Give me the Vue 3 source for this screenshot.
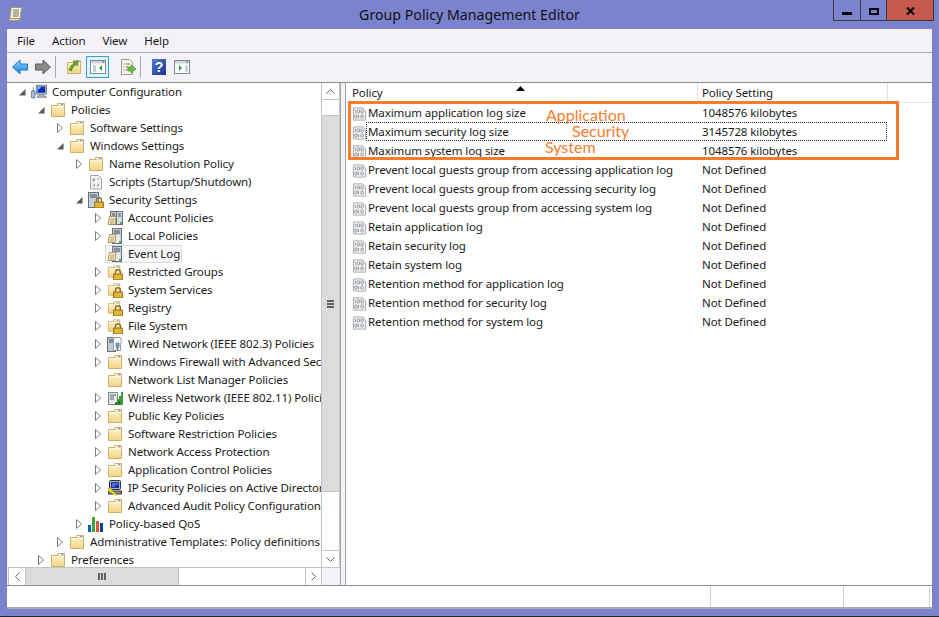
<template>
    <div class="window">
        <svg class="icon-defs" aria-hidden="true">
            <defs>
                <linearGradient id="folderFill" x1="0" y1="0" x2="0" y2="1">
                    <stop offset="0" stop-color="#fdf1c4" />
                    <stop offset="1" stop-color="#f3d483" />
                </linearGradient>
                <linearGradient id="blueArrow" x1="0" y1="0" x2="0" y2="1">
                    <stop offset="0" stop-color="#8fd4f8" />
                    <stop offset="1" stop-color="#1482d8" />
                </linearGradient>
                <linearGradient id="helpFill" x1="0" y1="0" x2="1" y2="1">
                    <stop offset="0" stop-color="#4f7fd8" />
                    <stop offset="1" stop-color="#1c3285" />
                </linearGradient>
                <symbol id="folder" viewBox="0 0 16 16">
                    <path d="M1.5 3.5h13v11h-13z" fill="url(#folderFill)" stroke="#cdb06c" />
                    <path d="M7.5 1.5h7v2.5h-7z" fill="#fff" stroke="#cdb06c" />
                    <path d="M11 2.5h2.5" stroke="#6ba6e0" />
                    <path d="M2 4.5h12" stroke="#fff8dc" />
                </symbol>
                <symbol id="lock" viewBox="0 0 16 16">
                    <path d="M8.5 10V8.3a2.5 2.5 0 0 1 5 0V10" fill="none" stroke="#8a7440" stroke-width="1.4" />
                    <rect x="6.5" y="10" width="9" height="6" fill="#d8a41e" stroke="#8d6a12" stroke-width=".8" />
                    <path d="M7.5 12h7M7.5 14h7" stroke="#f3d26a" stroke-width=".8" />
                </symbol>
                <symbol id="folder-lock" viewBox="0 0 16 16">
                    <use href="#folder" width="14" height="15" />
                    <use href="#lock" width="16" height="16" />
                </symbol>
                <symbol id="script" viewBox="0 0 16 16">
                    <path d="M2.5 1.5h8l3 3v10.5h-11z" fill="#f4f4f4" stroke="#a4a4a4" />
                    <path d="M5 5h2l-1 2h-1zM9 5h2.5M5 9.5l2 1.5-2 1.5M9 9.5l2 1.5-2 1.5" fill="none" stroke="#8c8c8c" stroke-width=".9" />
                </symbol>
                <symbol id="server" viewBox="0 0 16 16">
                    <rect x="5.5" y=".5" width="9" height="15" fill="#c2cbd3" stroke="#66727c" />
                    <path d="M7 3h6M7 5h6" stroke="#42505c" />
                    <rect x="6.5" y="7" width="7" height="8" fill="#e7ebee" />
                    <rect x="12" y="13" width="2" height="2" fill="#3dbb3d" />
                </symbol>
                <symbol id="paper" viewBox="0 0 16 16">
                    <path d="M2.5 6.5h6.5l-1 8h-7z" fill="#fbeebf" stroke="#a89868" />
                    <path d="M3.5 9h4M3 11h4M3 13h3.5" stroke="#8e8560" stroke-width=".8" />
                </symbol>
                <symbol id="server-lock" viewBox="0 0 16 16">
                    <rect x=".5" y=".5" width="10" height="15" fill="#c7d0d8" stroke="#60707c" />
                    <path d="M2 3h7M2 5h7" stroke="#3d4a56" />
                    <use href="#lock" width="16" height="16" />
                </symbol>
                <symbol id="server-doc" viewBox="0 0 16 16">
                    <use href="#server" width="16" height="16" />
                    <use href="#paper" width="16" height="16" />
                </symbol>
                <symbol id="servers" viewBox="0 0 16 16">
                    <rect x="3.5" y="1.5" width="6" height="13" fill="#c2cbd3" stroke="#66727c" />
                    <path d="M5 4h3M5 6h3" stroke="#42505c" />
                    <rect x="9.5" y="1.5" width="6" height="13" fill="#d5dce2" stroke="#66727c" />
                    <path d="M11 4h3M11 6h3" stroke="#42505c" />
                    <rect x="13" y="12" width="2" height="2" fill="#3dbb3d" />
                    <use href="#paper" width="16" height="16" />
                </symbol>
                <symbol id="computer" viewBox="0 0 20 18">
                    <rect x="6.5" y=".5" width="13" height="11" fill="#dfe3e8" stroke="#5d6670" />
                    <rect x="8" y="2" width="10" height="8" fill="#0c2cb8" />
                    <path d="M8 2h5l-3 4H8z" fill="#6fb4f0" />
                    <path d="M10 12h6v2h3v2H8v-2h2z" fill="#aab3bc" stroke="#5d6670" stroke-width=".6" />
                    <rect x=".5" y="7.5" width="4.5" height="9" rx="1" fill="#a8c0d8" stroke="#4d6a86" />
                    <path d="M2.7 3v6" stroke="#5d7c98" />
                </symbol>
                <symbol id="wired" viewBox="0 0 16 16">
                    <rect x=".5" y="1.5" width="8" height="14" fill="#c2cbd3" stroke="#66727c" />
                    <path d="M2 4h5M2 6h5" stroke="#42505c" />
                    <path d="M6.5 1.5h7c1 2 1 5 0 7v6h-7z" fill="#f8f8f8" stroke="#9a9a9a" />
                    <path d="M9 7h3v4h-1v3h-1v-3H9z" fill="#6ea2c9" stroke="#3a6d93" stroke-width=".6" />
                </symbol>
                <symbol id="wireless" viewBox="0 0 16 16">
                    <path d="M1.5 2.5h9v12h-9z" fill="#e4e8ea" stroke="#7a858e" />
                    <path d="M3 5h6M3 7h4M3 9h4" stroke="#5b6670" />
                    <path d="M6 15h2v-3h2v-3h2v-3h2V2h2v13z" fill="#3f9a35" />
                    <path d="M8 15v-2h2v2zM11 15v-4h2v4z" fill="#2c6c26" />
                </symbol>
                <symbol id="ipsec" viewBox="0 0 16 16">
                    <rect x="2.5" y=".5" width="11" height="9" rx="1" fill="#aab3bc" stroke="#333" />
                    <rect x="4" y="2" width="8" height="6" fill="#1a2fb0" />
                    <path d="M5 4h6M5 6h3" stroke="#7ab8f0" />
                    <path d="M1.5 11h13v3h-13z" fill="#8d949c" stroke="#333" />
                    <circle cx="3" cy="10" r="2" fill="#ffe640" stroke="#9a8410" stroke-width=".7" />
                    <path d="M4 11l6 5" stroke="#f0d820" stroke-width="1.8" />
                </symbol>
                <symbol id="qos" viewBox="0 0 16 16">
                    <rect x="0" y="9" width="3" height="7" fill="#0a5fb4" />
                    <rect x="4" y="1" width="3" height="15" fill="#3fa535" />
                    <rect x="8" y="5" width="3" height="11" fill="#e4572e" />
                    <rect x="12" y="7" width="3" height="9" fill="#0a3f8c" />
                </symbol>
                <symbol id="policy" viewBox="0 0 16 16">
                    <path d="M1.5 1.5h10l3 3v10h-13z" fill="#f4f4f4" stroke="#a9a9a9" />
                    <g fill="none" stroke="#7f8a94" stroke-width=".9">
                        <path d="M3.500 3.500v3.500" />
                        <rect x="5.500" y="3.500" width="2.500" height="3.500" rx="1" />
                        <rect x="9.500" y="3.500" width="2.500" height="3.500" rx="1" />
                        <rect x="3" y="9" width="2.500" height="3.500" rx="1" />
                        <path d="M7 9v3.500" />
                        <rect x="9.500" y="9" width="2.500" height="3.500" rx="1" />
                    </g>
                </symbol>
                <symbol id="pane" viewBox="0 0 16 16">
                    <rect x=".5" y="1.5" width="15" height="13" fill="#fff" stroke="#7d8891" />
                    <rect x="1" y="2" width="14" height="2.500" fill="#cfd6dc" />
                    <path d="M12 3h2" stroke="#59646d" />
                </symbol>
            </defs>
        </svg>

        <header class="title-bar">
            <svg class="app-icon" viewBox="0 0 16 16">
                <path d="M3 1.500h11c-1 2-1.500 7-1.500 11H2c0-4 1.500-9 1-11z" fill="#fbf5d8" stroke="#a59a70" />
                <path d="M1 12.500h10c0 1 .5 2 1 2H2c-.5 0-1-1-1-2z" fill="#efe3b0" stroke="#a59a70" />
                <path d="M5 4h6M5 6h6M5 8h6M4.500 10h6" stroke="#6f6f6f" />
            </svg>
            <span class="title-text">Group Policy Management Editor</span>
            <div class="window-controls">
                <button class="control">
                    <svg width="10" height="3" viewBox="0 0 10 3"><rect width="10" height="3" /></svg>
                </button>
                <button class="control control-max">
                    <svg width="10" height="7" viewBox="0 0 10 7"><path d="M1 1h8v5H1z" fill="none" stroke="#000" stroke-width="2" /></svg>
                </button>
                <button class="control control-close">
                    <svg width="9" height="8" viewBox="0 0 9 8"><path d="M1 .5l7 7M8 .5l-7 7" stroke="#000" stroke-width="2" /></svg>
                </button>
            </div>
        </header>

        <main class="client">
            <nav class="menu-bar">
                <span v-for="item in menuItems" :key="item">{{ item }}</span>
            </nav>

            <div class="tool-bar">
                <svg class="tool tool-back" viewBox="0 0 16 16">
                    <path d="M.5 8L8 1v4h7.500v6H8v4z" fill="url(#blueArrow)" stroke="#1c78c8" />
                </svg>
                <svg class="tool tool-forward" viewBox="0 0 16 16">
                    <path d="M15.500 8L8 1v4H.5v6H8v4z" fill="#8b8b8b" stroke="#5a5a5a" />
                </svg>
                <span class="tool-sep"></span>
                <svg class="tool tool-up" viewBox="0 0 16 16">
                    <use href="#folder" width="16" height="16" />
                    <path d="M3 11c1-3 2-5 5-6L7 3l5-1-.5 5-1.500-1.500C8 7 6 9 5.500 12z" fill="#5ea92e" stroke="#3a7c18" stroke-width=".6" />
                </svg>
                <span class="tool-active">
                    <svg class="tool" viewBox="0 0 16 16">
                        <use href="#pane" width="16" height="16" />
                        <path d="M3 6h3v7H3z" fill="#c4d4e4" />
                        <path d="M12 6v6L9 9z" fill="#2fa52f" />
                    </svg>
                </span>
                <svg class="tool tool-doc" viewBox="0 0 16 16">
                    <path d="M1.500.5h8l3 3v12h-11z" fill="#fbf7e4" stroke="#9a9a90" />
                    <path d="M3.500 5h1M6 5h4M3.500 8h1M6 8h2M3.500 11h1M6 11h2" stroke="#666" />
                    <path d="M8 8h3V6l5 4-5 4v-2H8z" fill="#63c13d" stroke="#388f1c" stroke-width=".6" />
                </svg>
                <span class="tool-sep tool-sep-2"></span>
                <svg class="tool tool-help" viewBox="0 0 14 16">
                    <rect width="14" height="16" fill="url(#helpFill)" />
                    <text x="7" y="13" text-anchor="middle" class="help-mark">?</text>
                </svg>
                <svg class="tool tool-pane" viewBox="0 0 16 16">
                    <use href="#pane" width="16" height="16" />
                    <path d="M11 6h3v7h-3z" fill="#c4d4e4" />
                    <path d="M5 6v6l3-3z" fill="#2fa52f" />
                </svg>
            </div>

            <div class="panes">
                <section class="tree-pane">
                    <div class="tree-body">
                        <div class="tree">
                            <div
                                v-for="node in treeNodes"
                                :key="node.label"
                                class="tree-row"
                                :style="{ paddingLeft: 8 + node.depth * 19 + 'px' }"
                            >
                                <span class="twist">
                                    <svg v-if="node.state === 'open'" width="7" height="7" viewBox="0 0 7 7">
                                        <path d="M6.500 0v6.500H0z" fill="#595959" />
                                    </svg>
                                    <svg v-else-if="node.state === 'closed'" width="6" height="10" viewBox="0 0 6 10">
                                        <path d="M.5.5l5 4.500-5 4.500z" fill="#fff" stroke="#7a7a7a" />
                                    </svg>
                                </span>
                                <span class="node" :class="{ selected: node.selected }">
                                    <svg class="node-icon">
                                        <use :href="'#' + node.icon" width="100%" height="100%" />
                                    </svg>
                                    <span class="lift">{{ node.label }}</span>
                                </span>
                            </div>
                        </div>
                        <div class="v-scroll">
                            <span class="scroll-btn">
                                <svg width="9" height="5" viewBox="0 0 9 5"><path d="M.5 4.500l4-4 4 4" fill="none" stroke="#666" /></svg>
                            </span>
                            <span class="v-gap"></span>
                            <span class="v-thumb"><i></i><i></i><i></i></span>
                            <span class="scroll-fill"></span>
                            <span class="scroll-btn scroll-btn-end">
                                <svg width="9" height="5" viewBox="0 0 9 5"><path d="M.5.5l4 4 4-4" fill="none" stroke="#666" /></svg>
                            </span>
                        </div>
                    </div>
                    <div class="h-scroll">
                        <span class="h-btn">
                            <svg width="5" height="9" viewBox="0 0 5 9"><path d="M4.500.5l-4 4 4 4" fill="none" stroke="#666" /></svg>
                        </span>
                        <span class="h-thumb"><i></i><i></i><i></i></span>
                        <span class="scroll-fill"></span>
                        <span class="h-btn h-btn-end">
                            <svg width="5" height="9" viewBox="0 0 5 9"><path d="M.5.5l4 4-4 4" fill="none" stroke="#666" /></svg>
                        </span>
                        <span class="scroll-corner"></span>
                    </div>
                </section>

                <span class="splitter"></span>

                <section class="list-pane">
                    <div class="list-head">
                        <span class="head-cell head-policy">
                            Policy
                            <svg class="sort-mark" width="9" height="5" viewBox="0 0 9 5"><path d="M4.500 0L9 5H0z" /></svg>
                        </span>
                        <span class="head-cell head-setting">Policy Setting</span>
                    </div>
                    <div v-for="(row, i) in policies" :key="row.name" class="list-row">
                        <span class="row-name">
                            <svg class="row-icon"><use href="#policy" width="15" height="16" /></svg>
                            <span class="lift">{{ row.name }}</span>
                        </span>
                        <span class="row-value lift">{{ row.value }}</span>
                        <span v-if="i === 1" class="focus-ring"></span>
                    </div>

                    <div class="callout">
                        <span class="callout-label label-application">Application</span>
                        <span class="callout-label label-security">Security</span>
                        <span class="callout-label label-system">System</span>
                    </div>
                </section>
            </div>

            <footer class="status-bar">
                <span></span>
                <span></span>
                <span></span>
                <span></span>
            </footer>
        </main>
    </div>
</template>

<script setup>
const menuItems = ["File", "Action", "View", "Help"];

const treeNodes = [
    { depth: 0, state: "open", icon: "computer", label: "Computer Configuration" },
    { depth: 1, state: "open", icon: "folder", label: "Policies" },
    { depth: 2, state: "closed", icon: "folder", label: "Software Settings" },
    { depth: 2, state: "open", icon: "folder", label: "Windows Settings" },
    { depth: 3, state: "closed", icon: "folder", label: "Name Resolution Policy" },
    { depth: 3, state: "", icon: "script", label: "Scripts (Startup/Shutdown)" },
    { depth: 3, state: "open", icon: "server-lock", label: "Security Settings" },
    { depth: 4, state: "closed", icon: "servers", label: "Account Policies" },
    { depth: 4, state: "closed", icon: "server-doc", label: "Local Policies" },
    { depth: 4, state: "", icon: "server-doc", label: "Event Log", selected: true },
    { depth: 4, state: "closed", icon: "folder-lock", label: "Restricted Groups" },
    { depth: 4, state: "closed", icon: "folder-lock", label: "System Services" },
    { depth: 4, state: "closed", icon: "folder-lock", label: "Registry" },
    { depth: 4, state: "closed", icon: "folder-lock", label: "File System" },
    { depth: 4, state: "closed", icon: "wired", label: "Wired Network (IEEE 802.3) Policies" },
    { depth: 4, state: "closed", icon: "folder", label: "Windows Firewall with Advanced Security" },
    { depth: 4, state: "", icon: "folder", label: "Network List Manager Policies" },
    { depth: 4, state: "closed", icon: "wireless", label: "Wireless Network (IEEE 802.11) Policies" },
    { depth: 4, state: "closed", icon: "folder", label: "Public Key Policies" },
    { depth: 4, state: "closed", icon: "folder", label: "Software Restriction Policies" },
    { depth: 4, state: "closed", icon: "folder", label: "Network Access Protection" },
    { depth: 4, state: "closed", icon: "folder", label: "Application Control Policies" },
    { depth: 4, state: "closed", icon: "ipsec", label: "IP Security Policies on Active Directory" },
    { depth: 4, state: "closed", icon: "folder", label: "Advanced Audit Policy Configuration" },
    { depth: 3, state: "closed", icon: "qos", label: "Policy-based QoS" },
    { depth: 2, state: "closed", icon: "folder", label: "Administrative Templates: Policy definitions (ADMX files)" },
    { depth: 1, state: "closed", icon: "folder", label: "Preferences" },
];

const policies = [
    { name: "Maximum application log size", value: "1048576 kilobytes" },
    { name: "Maximum security log size", value: "3145728 kilobytes" },
    { name: "Maximum system log size", value: "1048576 kilobytes" },
    { name: "Prevent local guests group from accessing application log", value: "Not Defined" },
    { name: "Prevent local guests group from accessing security log", value: "Not Defined" },
    { name: "Prevent local guests group from accessing system log", value: "Not Defined" },
    { name: "Retain application log", value: "Not Defined" },
    { name: "Retain security log", value: "Not Defined" },
    { name: "Retain system log", value: "Not Defined" },
    { name: "Retention method for application log", value: "Not Defined" },
    { name: "Retention method for security log", value: "Not Defined" },
    { name: "Retention method for system log", value: "Not Defined" },
];
</script>

<style scoped>
.window {
    position: relative;
    width: 939px;
    height: 617px;
    overflow: hidden;
    box-sizing: border-box;
    background: #7b83cf;
    border-bottom: 1px solid #1f2a2a;
    font-family: "Noto Sans", "Open Sans", sans-serif;
    font-size: 11.5px;
    letter-spacing: -0.1px;
    color: #1a1a1a;
}

.icon-defs {
    position: absolute;
    width: 0;
    height: 0;
}

.title-bar {
    height: 29px;
    display: grid;
    grid-template-columns: 1fr auto 1fr;
    align-items: start;
}

.app-icon {
    width: 16px;
    height: 16px;
    margin: 6px 0 0 8px;
}

.title-text {
    margin-top: 5px;
    font-size: 14.2px;
    letter-spacing: 0;
    line-height: 19px;
    color: #111;
}

.window-controls {
    justify-self: end;
    display: flex;
    margin-right: 5px;
    height: 21px;
    box-sizing: border-box;
    border: 1px solid #3a3a3a;
    border-top: none;
}

.control {
    width: 27px;
    padding: 0;
    border: none;
    background: none;
    display: flex;
    align-items: center;
    justify-content: center;
    border-right: 1px solid #3a3a3a;
}

.control svg {
    transform: translateY(1px);
}

.control:first-child svg {
    transform: translateY(3px);
}

.control-max {
    width: 26px;
}

.control-close {
    width: 46px;
    border-right: none;
    background: #c75a50;
}

.client {
    margin-left: 7px;
    width: 925px;
    height: 580px;
    display: flex;
    flex-direction: column;
    background: #f5f2f7;
}

.menu-bar {
    height: 23px;
    flex: none;
    display: flex;
    align-items: center;
    gap: 17px;
    padding-left: 10px;
    border-bottom: 1px solid #aaa9ae;
}

.tool-bar {
    height: 29px;
    flex: none;
    display: flex;
    align-items: center;
    box-sizing: border-box;
    padding: 0 0 2px 5px;
}

.tool {
    flex: none;
    width: 16px;
    height: 16px;
}

.tool-forward {
    margin-left: 7px;
}

.tool-sep {
    width: 1px;
    height: 22px;
    margin: 0 10px 0 4px;
    background: #a9a9a9;
}

.tool-up {
    margin-right: 4px;
}

.tool-active {
    width: 23px;
    height: 22px;
    display: flex;
    align-items: center;
    justify-content: center;
    box-sizing: border-box;
    background: #e2f1fb;
    border: 1px solid #2ba2e0;
}

.tool-doc {
    margin-left: 11px;
}

.tool-sep-2 {
    margin-right: 11px;
}

.tool-help {
    width: 14px;
}

.help-mark {
    font-family: "Liberation Sans", sans-serif;
    font-size: 14px;
    font-weight: 700;
    fill: #fff;
}

.tool-pane {
    margin-left: 8px;
}

.panes {
    flex: none;
    height: 504px;
    display: flex;
    border-top: 1px solid #8d8d92;
    border-bottom: 1px solid #8d8d92;
    box-sizing: border-box;
}

.tree-pane {
    width: 333px;
    margin-left: 1px;
    flex: none;
    display: flex;
    flex-direction: column;
    background: #fff;
    border-right: 1px solid #a4a4aa;
    box-sizing: border-box;
}

.tree-body {
    flex: 1;
    min-height: 0;
    display: flex;
}

.tree {
    flex: 1;
    min-width: 0;
    overflow: hidden;
}

.tree-row {
    height: 18px;
    display: flex;
    align-items: center;
    white-space: nowrap;
}

.twist {
    flex: none;
    width: 15px;
    height: 18px;
    display: flex;
    align-items: center;
    justify-content: flex-start;
    padding-left: 3px;
    box-sizing: border-box;
}

.node {
    height: 18px;
    display: flex;
    align-items: center;
    gap: 5px;
    margin-left: -2px;
    padding: 0 1px 0 1px;
    border: 1px solid transparent;
    box-sizing: border-box;
}

.node.selected {
    background: #f7f7f7;
    border-color: #d9d9d9;
}

.node-icon {
    flex: none;
    width: 16px;
    height: 16px;
}

/* text sits a pixel higher than the icon centre */
.lift {
    padding-bottom: 2px;
}

.v-scroll {
    flex: none;
    width: 17px;
    display: flex;
    flex-direction: column;
    border-left: 1px solid #c4c4c4;
    border-right: 1px solid #c4c4c4;
    box-sizing: content-box;
}

.scroll-btn {
    flex: none;
    height: 17px;
    display: flex;
    align-items: center;
    justify-content: center;
    border-bottom: 1px solid #c4c4c4;
    box-sizing: border-box;
}

.scroll-btn-end {
    border-bottom: none;
    border-top: 1px solid #c4c4c4;
}

.v-gap {
    flex: none;
    height: 15px;
}

.v-thumb {
    flex: none;
    height: 377px;
    display: flex;
    flex-direction: column;
    align-items: center;
    justify-content: center;
    gap: 1px;
    background: #dcdcdc;
    border-top: 1px solid #c4c4c4;
    border-bottom: 1px solid #c4c4c4;
    box-sizing: border-box;
}

.v-thumb i {
    width: 7px;
    height: 2px;
    background: #606060;
}

.scroll-fill {
    flex: 1;
}

.h-scroll {
    flex: none;
    height: 18px;
    display: flex;
    background: #fff;
    border-top: 1px solid #c4c4c4;
    box-sizing: border-box;
}

.h-btn {
    flex: none;
    width: 18px;
    display: flex;
    align-items: center;
    justify-content: center;
    box-sizing: border-box;
    border-left: 1px solid #c4c4c4;
    border-right: 1px solid #c4c4c4;
}

.h-btn-end {
    width: 17px;
}

.h-thumb {
    flex: none;
    width: 153px;
    display: flex;
    align-items: center;
    justify-content: center;
    gap: 1px;
    background: #dcdcdc;
    border-right: 1px solid #c4c4c4;
    box-sizing: border-box;
}

.h-thumb i {
    width: 2px;
    height: 7px;
    background: #606060;
}

.scroll-corner {
    flex: none;
    width: 18px;
    background: #f5f2f7;
}

.splitter {
    flex: none;
    width: 4px;
}

.list-pane {
    position: relative;
    flex: 1;
    min-width: 0;
    background: #fff;
    border-left: 1px solid #a4a4aa;
}

.list-head {
    height: 20px;
    display: flex;
    box-sizing: border-box;
    border-bottom: 1px solid #e5e5e5;
    margin-bottom: 1px;
}

.head-cell {
    position: relative;
    box-sizing: border-box;
    line-height: 19px;
    border-right: 1px solid #e5e5e5;
}

.head-policy {
    width: 352px;
    padding-left: 6px;
}

.head-setting {
    width: 190px;
    padding-left: 4px;
}

.sort-mark {
    position: absolute;
    left: 170px;
    top: 3px;
}

.list-row {
    position: relative;
    height: 19px;
    display: flex;
    align-items: center;
    white-space: nowrap;
}

.row-name {
    width: 352px;
    flex: none;
    display: flex;
    align-items: center;
    gap: 1px;
    padding-left: 6px;
    box-sizing: border-box;
}

.row-icon {
    flex: none;
    width: 15px;
    height: 16px;
}

.row-value {
    padding-left: 4px;
}

.focus-ring {
    position: absolute;
    left: 20px;
    top: -1px;
    width: 521px;
    height: 19px;
    box-sizing: border-box;
    border: 1px dotted #222;
}

.callout {
    position: absolute;
    left: 2px;
    top: 18px;
    width: 551px;
    height: 59px;
    box-sizing: border-box;
    border: 3px solid #f97c2d;
}

.callout-label {
    position: absolute;
    font-family: "Lato", sans-serif;
    font-size: 16px;
    letter-spacing: 0;
    line-height: 18px;
    color: #f97c2d;
    white-space: nowrap;
}

.label-application {
    left: 195px;
    top: 2px;
}

.label-security {
    left: 221px;
    top: 18px;
}

.label-system {
    left: 194px;
    top: 34px;
}

.status-bar {
    flex: 1;
    display: grid;
    grid-template-columns: 704px 133px 86px 2px;
    background: #fff;
    border-bottom: 2px solid #aaa;
    box-sizing: border-box;
}

.status-bar span {
    border-right: 1px solid #cfcfcf;
    margin-top: 1px;
}

.status-bar span:last-child {
    border-right: none;
}
</style>

<style>
html,
body {
    background: #7b83cf;
}
</style>
